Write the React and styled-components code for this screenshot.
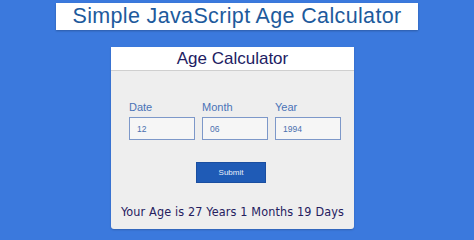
import React from 'react';
import styled, {createGlobalStyle} from 'styled-components';

const Global = createGlobalStyle`
    html, body {
        margin: 0;
        background-color: #3b79dd;
    }
`;

const Page = styled.div`
    width: 474px;
    height: 239px;
    display: flex;
    flex-direction: column;
    overflow: hidden;
`;

const Title = styled.h1`
    align-self: center;
    width: 362px;
    height: 27px;
    margin: 3px 0 0 0;
    background-color: #fff;
    box-shadow: 0 1px 2px rgba(0, 0, 0, 0.25);
    color: #1d5a9c;
    font-family: "Liberation Sans", Arial, sans-serif;
    font-size: 21.5px;
    font-weight: normal;
    letter-spacing: 0.35px;
    line-height: 27px;
    text-align: center;
`;

const Card = styled.div`
    width: 243px;
    margin: 17px 0 0 111px;
    background-color: #eeeeee;
    border-radius: 0 0 3px 3px;
    box-shadow: 0 1px 2px rgba(0, 0, 0, 0.2);
`;

const CardHead = styled.h2`
    margin: 0;
    height: 23px;
    background-color: #fff;
    border-bottom: 1px solid #cfcfcf;
    color: #221c63;
    font-family: "Liberation Sans", Arial, sans-serif;
    font-size: 17px;
    font-weight: normal;
    line-height: 24px;
    text-align: center;
`;

const Fields = styled.div`
    display: flex;
    gap: 7px;
    padding: 30px 0 0 18px;
`;

const Field = styled.label`
    display: flex;
    flex-direction: column;
    gap: 4px;
    color: #4a73b7;
    font-family: "Liberation Sans", Arial, sans-serif;
    font-size: 11px;
`;

const Input = styled.input`
    box-sizing: border-box;
    width: 66px;
    height: 23px;
    padding: 0 0 0 7px;
    border: 1px solid #7d98c9;
    background-color: #f6f6f6;
    color: #4a6fae;
    font-family: "Liberation Sans", Arial, sans-serif;
    font-size: 8.5px;
    outline: none;
`;

const Submit = styled.button`
    display: block;
    width: 70px;
    height: 21px;
    margin: 22px 0 0 85px;
    border: 1px solid #1a4ea0;
    background-color: #1f5bb6;
    color: #e8eefa;
    font-family: "Liberation Sans", Arial, sans-serif;
    font-size: 8px;
`;

const Result = styled.p`
    margin: 0;
    padding: 21px 0 10px 0;
    color: #25205e;
    font-family: "DejaVu Sans Condensed", "DejaVu Sans", sans-serif;
    font-size: 12.5px;
    letter-spacing: 0.15px;
    white-space: nowrap;
    text-align: center;
`;

export default function App() {
    return (
        <Page>
            <Global />
            <Title>Simple JavaScript Age Calculator</Title>
            <Card>
                <CardHead>Age Calculator</CardHead>
                <Fields>
                    <Field>Date<Input defaultValue="12" /></Field>
                    <Field>Month<Input defaultValue="06" /></Field>
                    <Field>Year<Input defaultValue="1994" /></Field>
                </Fields>
                <Submit>Submit</Submit>
                <Result>Your Age is 27 Years 1 Months 19 Days</Result>
            </Card>
        </Page>
    );
}
